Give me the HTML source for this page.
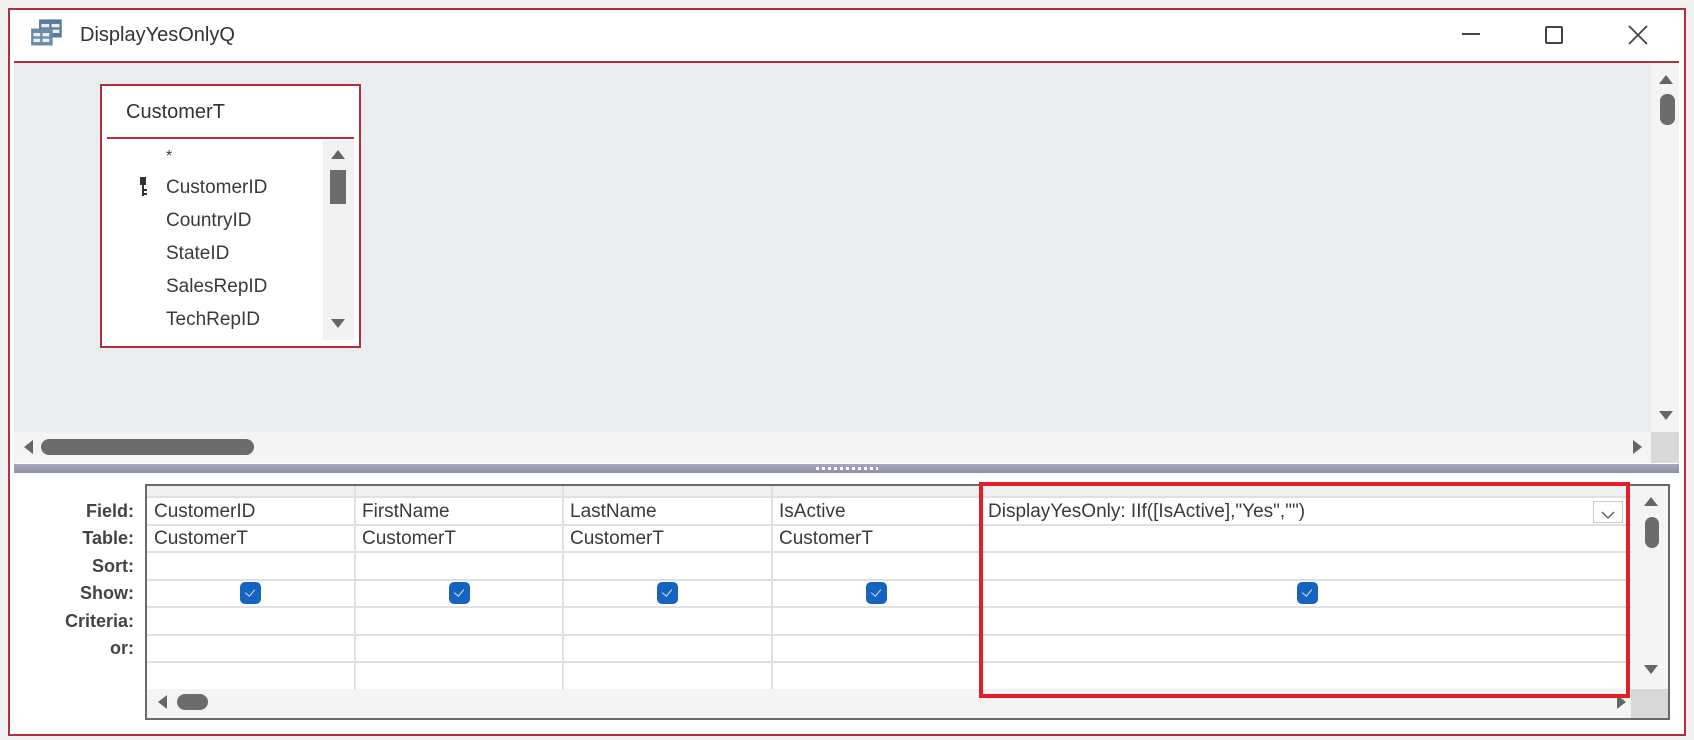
<!DOCTYPE html>
<html><head><meta charset="utf-8"><style>
*{margin:0;padding:0;box-sizing:border-box}
body{width:1694px;height:740px;background:#f0f0f0;position:relative;overflow:hidden;font-family:"Liberation Sans",sans-serif;color:#333}
.a{position:absolute}
.t{position:absolute;font-size:19px;color:#3a3a3a;white-space:nowrap;line-height:22px}
.hl{position:absolute;height:2px;background:#dde1e6}
.vl{position:absolute;width:2px;background:#dde1e6}
.cb{position:absolute;width:21px;height:22px;background:#1565c0;border-radius:5px}
.cb:after{content:"";position:absolute;left:7px;top:5px;width:5px;height:8px;border:solid #cfe0f5;border-width:0 1.5px 1.5px 0;transform:rotate(40deg)}
.lab{position:absolute;right:1560px;font-size:18px;font-weight:bold;color:#444;line-height:22px;text-align:right}
</style></head><body>
<div class="a" style="left:8px;top:8px;width:1678px;height:728px;background:#fff;border:2px solid #b03040"></div>
<!-- title -->
<svg class="a" style="left:30px;top:18px" width="34" height="30" viewBox="0 0 30 26"><rect x="8" y="1" width="20" height="16" fill="#5a7a9a"/><rect x="10" y="5" width="7" height="3" fill="#e8eef4"/><rect x="19" y="5" width="7" height="3" fill="#e8eef4"/><rect x="19" y="10" width="7" height="3" fill="#e8eef4"/><rect x="1" y="9" width="19" height="15" fill="#6a8aa8"/><rect x="3" y="13" width="6" height="3" fill="#e8eef4"/><rect x="11" y="13" width="6" height="3" fill="#e8eef4"/><rect x="3" y="18" width="6" height="3" fill="#e8eef4"/><rect x="11" y="18" width="6" height="3" fill="#e8eef4"/></svg>
<div class="t" style="left:80px;top:24px;font-size:20px;color:#333">DisplayYesOnlyQ</div>
<div class="a" style="left:1462px;top:33px;width:18px;height:2px;background:#444"></div>
<div class="a" style="left:1545px;top:26px;width:18px;height:18px;border:2px solid #444;border-radius:2px"></div>
<svg class="a" style="left:1628px;top:25px" width="20" height="20"><path d="M1 1L19 19M19 1L1 19" stroke="#444" stroke-width="1.8"/></svg>
<div class="a" style="left:14px;top:61px;width:1665px;height:2px;background:#b03040"></div>
<!-- upper pane -->
<div class="a" style="left:14px;top:63px;width:1637px;height:369px;background:#eaedf0"></div>
<div class="a" style="left:1651px;top:63px;width:28px;height:369px;background:#f4f4f4"></div>
<svg class="a" style="left:1658px;top:73px" width="16" height="12"><path d="M1 11L8 2L15 11Z" fill="#666"/></svg>
<div class="a" style="left:1660px;top:94px;width:15px;height:31px;background:#6c6c6c;border-radius:7px"></div>
<svg class="a" style="left:1658px;top:410px" width="16" height="12"><path d="M1 1L8 10L15 1Z" fill="#666"/></svg>
<div class="a" style="left:14px;top:432px;width:1665px;height:31px;background:#f4f4f4"></div>
<div class="a" style="left:1651px;top:432px;width:28px;height:31px;background:#d8d8d8"></div>
<svg class="a" style="left:22px;top:439px" width="12" height="16"><path d="M11 1L2 8L11 15Z" fill="#666"/></svg>
<div class="a" style="left:41px;top:439px;width:213px;height:16px;background:#6c6c6c;border-radius:8px"></div>
<svg class="a" style="left:1632px;top:439px" width="12" height="16"><path d="M1 1L10 8L1 15Z" fill="#666"/></svg>
<div class="a" style="left:14px;top:464px;width:1665px;height:9px;background:linear-gradient(#a7a7bd,#8e8ea8)"></div>
<div class="a" style="left:816px;top:467px;width:62px;height:3px;background:repeating-linear-gradient(90deg,#fff 0 3px,transparent 3px 6px)"></div>
<!-- table box -->
<div class="a" style="left:100px;top:84px;width:261px;height:264px;background:#fff;border:2px solid #b03040"></div>
<div class="t" style="left:126px;top:101px;font-size:20px;color:#333">CustomerT</div>
<div class="a" style="left:107px;top:137px;width:247px;height:2px;background:#b03040"></div>
<div class="a" style="left:323px;top:140px;width:31px;height:200px;background:#f2f2f2"></div>
<svg class="a" style="left:330px;top:148px" width="16" height="12"><path d="M1 11L8 2L15 11Z" fill="#666"/></svg>
<div class="a" style="left:330px;top:170px;width:16px;height:34px;background:#6c6c6c"></div>
<svg class="a" style="left:330px;top:318px" width="16" height="12"><path d="M1 1L8 10L15 1Z" fill="#666"/></svg>
<div class="t" style="left:166px;top:146px;font-size:16px">*</div>
<svg class="a" style="left:139px;top:177px" width="12" height="20"><rect x="1" y="0" width="6" height="8" fill="#333"/><rect x="3" y="8" width="2" height="11" fill="#333"/><rect x="5" y="12" width="3" height="2" fill="#333"/><rect x="5" y="16" width="3" height="2" fill="#333"/></svg>
<div class="t" style="left:166px;top:177px">CustomerID</div>
<div class="t" style="left:166px;top:210px">CountryID</div>
<div class="t" style="left:166px;top:243px">StateID</div>
<div class="t" style="left:166px;top:276px">SalesRepID</div>
<div class="t" style="left:166px;top:309px">TechRepID</div>
<!-- grid labels -->
<div class="lab" style="top:500px;right:1560px">Field:</div>
<div class="lab" style="top:527px;right:1560px">Table:</div>
<div class="lab" style="top:555px;right:1560px">Sort:</div>
<div class="lab" style="top:582px;right:1560px">Show:</div>
<div class="lab" style="top:610px;right:1560px">Criteria:</div>
<div class="lab" style="top:637px;right:1560px">or:</div>
<!-- grid -->
<div class="a" style="left:145px;top:484px;width:1525px;height:236px;border:2px solid #6a6a6a;background:#fff"></div>
<div class="a" style="left:147px;top:486px;width:1484px;height:11px;background:#f0f0f0"></div>
<div class="hl" style="left:147px;top:496px;width:1484px"></div>
<div class="hl" style="left:147px;top:524px;width:1484px"></div>
<div class="hl" style="left:147px;top:551px;width:1484px"></div>
<div class="hl" style="left:147px;top:579px;width:1484px"></div>
<div class="hl" style="left:147px;top:606px;width:1484px"></div>
<div class="hl" style="left:147px;top:634px;width:1484px"></div>
<div class="hl" style="left:147px;top:661px;width:1484px"></div>
<div class="vl" style="left:354px;top:486px;height:203px"></div>
<div class="vl" style="left:562px;top:486px;height:203px"></div>
<div class="vl" style="left:771px;top:486px;height:203px"></div>
<div class="vl" style="left:979px;top:486px;height:203px"></div>
<div class="a" style="left:147px;top:689px;width:1484px;height:29px;background:#f4f4f4"></div>
<svg class="a" style="left:156px;top:694px" width="12" height="16"><path d="M11 1L2 8L11 15Z" fill="#666"/></svg>
<div class="a" style="left:177px;top:694px;width:31px;height:16px;background:#6c6c6c;border-radius:8px"></div>
<svg class="a" style="left:1616px;top:694px" width="12" height="16"><path d="M1 1L10 8L1 15Z" fill="#666"/></svg>
<div class="a" style="left:1631px;top:486px;width:37px;height:203px;background:#f4f4f4"></div>
<div class="a" style="left:1631px;top:689px;width:37px;height:29px;background:#d8d8d8"></div>
<svg class="a" style="left:1643px;top:495px" width="16" height="12"><path d="M1 11L8 2L15 11Z" fill="#666"/></svg>
<div class="a" style="left:1645px;top:517px;width:14px;height:31px;background:#6c6c6c;border-radius:7px"></div>
<svg class="a" style="left:1643px;top:664px" width="16" height="12"><path d="M1 1L8 10L15 1Z" fill="#666"/></svg>
<div class="t" style="left:154px;top:501px">CustomerID</div>
<div class="t" style="left:362px;top:501px">FirstName</div>
<div class="t" style="left:570px;top:501px">LastName</div>
<div class="t" style="left:779px;top:501px">IsActive</div>
<div class="t" style="left:988px;top:501px">DisplayYesOnly: IIf([IsActive],"Yes","")</div>
<div class="a" style="left:1593px;top:501px;width:30px;height:22px;border:1px solid #ccc;background:#fff"></div>
<svg class="a" style="left:1601px;top:511px" width="14" height="9"><path d="M1 1L7 7L13 1" stroke="#555" fill="none" stroke-width="1.3"/></svg>
<div class="t" style="left:154px;top:528px">CustomerT</div>
<div class="t" style="left:362px;top:528px">CustomerT</div>
<div class="t" style="left:570px;top:528px">CustomerT</div>
<div class="t" style="left:779px;top:528px">CustomerT</div>
<div class="cb" style="left:240px;top:582px"></div>
<div class="cb" style="left:449px;top:582px"></div>
<div class="cb" style="left:657px;top:582px"></div>
<div class="cb" style="left:866px;top:582px"></div>
<div class="cb" style="left:1297px;top:582px"></div>
<!-- red highlight -->
<div class="a" style="left:979px;top:482px;width:651px;height:216px;border:4px solid #e31e26"></div>
</body></html>
